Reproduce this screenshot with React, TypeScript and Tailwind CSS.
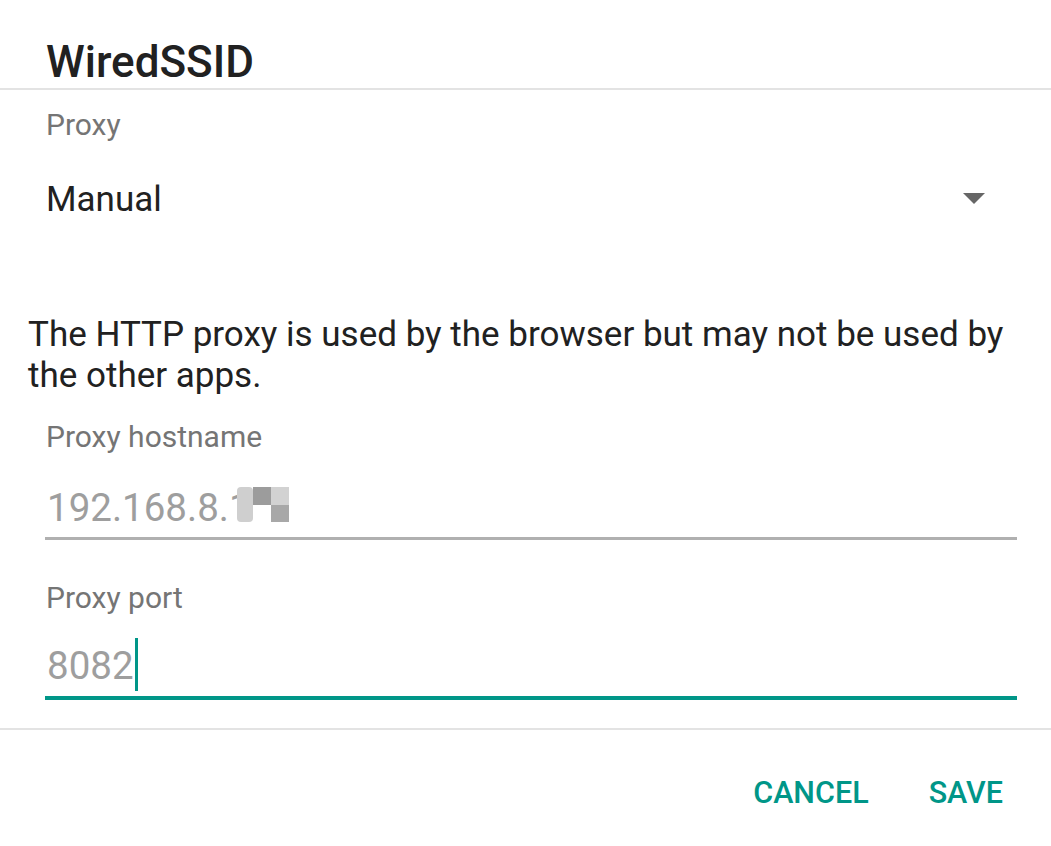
import { useState } from "react";

const ProxyDialog = () => {
  const [port] = useState("8082");

  return (
    <div className="w-[1051px] h-[846px] bg-white font-['Roboto','Liberation_Sans',sans-serif] overflow-hidden">
      {/* title */}
      <div className="h-[90px] border-b-2 border-[#e3e3e3] px-[46px] pt-[38px]">
        <h1 className="text-[44px] leading-[48px] font-medium text-[#212121]">WiredSSID</h1>
      </div>

      <div className="px-[46px]">
        <div className="pt-[18px] text-[30px] leading-[34px] text-[#757575]">Proxy</div>
        <div className="mt-[38px] flex items-center justify-between h-[40px] pr-[20px]">
          <span className="text-[35px] leading-[40px] text-[#212121]">Manual</span>
          <svg width="22" height="11" viewBox="0 0 22 11" className="mt-[-4px]">
            <path d="M0 0h22L11 11z" fill="#666666" />
          </svg>
        </div>
      </div>

      <p className="mt-[94px] px-[28px] text-[35px] leading-[41px] text-[#212121]">
        The HTTP proxy is used by the browser but may not be used by the other apps.
      </p>

      <div className="pl-[45px] pr-[34px]">
        {/* hostname */}
        <div className="mt-[24px] text-[30px] leading-[34px] text-[#757575] pl-[1px]">Proxy hostname</div>
        <div className="mt-[32px] h-[54px] flex items-start border-b-[3px] border-[#b0b0b0] pl-[2px]">
          <span className="w-[190px] shrink-0 overflow-hidden whitespace-nowrap text-[38.5px] leading-[44px] text-[#9e9e9e]">192.168.8.1</span>
          {/* pixelated part */}
          <div className="flex h-[35px] mt-[1px]">
            <div className="w-[16px] h-full rounded-[4px] bg-[#cfcfcf]" />
            <div className="flex flex-col w-[18px]">
              <div className="h-1/2 bg-[#9c9c9c]" />
              <div className="h-1/2 bg-white" />
            </div>
            <div className="flex flex-col w-[18px]">
              <div className="h-1/2 bg-[#d2d2d2]" />
              <div className="h-1/2 bg-[#a8a8a8]" />
            </div>
          </div>
        </div>

        {/* port */}
        <div className="mt-[41px] text-[30px] leading-[34px] text-[#757575] pl-[1px]">Proxy port</div>
        <div className="mt-[29px] h-[56px] flex items-start border-b-4 border-[#009688] pl-[2px]">
          <span className="text-[38.5px] leading-[44px] text-[#9e9e9e]">{port}</span>
          <span className="w-[3px] h-[53px] mt-[-6px] bg-[#009688] ml-[1px]" />
        </div>
      </div>

      <div className="mt-[28px] border-t-2 border-[#e3e3e3]" />

      <div className="flex justify-end gap-[60px] pr-[48px] pt-[46px]">
        <button className="text-[30.5px] leading-[34px] font-medium text-[#009688]">CANCEL</button>
        <button className="text-[30.5px] leading-[34px] font-medium text-[#009688]">SAVE</button>
      </div>
    </div>
  );
};

export default function App() {
  return <ProxyDialog />;
}
